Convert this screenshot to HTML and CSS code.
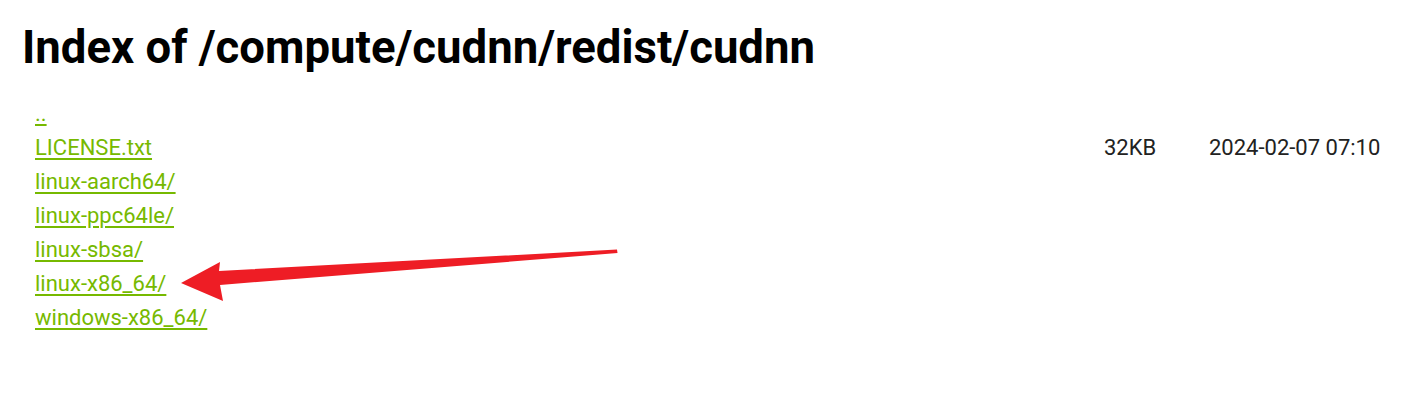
FILE: index.html
```html
<!DOCTYPE html>
<html>
<head>
<meta charset="utf-8">
<link rel="stylesheet" href="styles.css">
</head>
<body>
<h1 class="title">Index of /compute/cudnn/redist/cudnn</h1>
<div class="listing">
  <div class="row"><a class="link" href="#">..</a><span class="size"></span><span class="date"></span></div>
  <div class="row"><a class="link" href="#">LICENSE.txt</a><span class="size">32KB</span><span class="date">2024-02-07 07:10</span></div>
  <div class="row"><a class="link" href="#">linux-aarch64/</a><span class="size"></span><span class="date"></span></div>
  <div class="row"><a class="link" href="#">linux-ppc64le/</a><span class="size"></span><span class="date"></span></div>
  <div class="row"><a class="link" href="#">linux-sbsa/</a><span class="size"></span><span class="date"></span></div>
  <div class="row"><a class="link" href="#">linux-x86_64/</a><span class="size"></span><span class="date"></span></div>
  <div class="row"><a class="link" href="#">windows-x86_64/</a><span class="size"></span><span class="date"></span></div>
</div>
<svg class="arrow" width="1420" height="402" viewBox="0 0 1420 402">
  <path d="M617 249.5 L617.5 253 L220 285 L223 301 L181 283 L220 262 L219 271 Z" fill="#ee1d25"/>
</svg>
</body>
</html>
```
FILE: styles.css
```css
html, body {
  margin: 0;
  padding: 0;
  background: #fff;
}
body {
  font-family: Roboto, "Liberation Sans", sans-serif;
  color: #1a1a1a;
  position: relative;
  width: 1420px;
  height: 402px;
  overflow: hidden;
}
.title {
  margin: 0;
  padding: 22px 0 0 22px;
  font-size: 45.5px;
  font-weight: 700;
  line-height: 52px;
  color: #000;
}
.listing {
  padding: 22px 0 0 35px;
  display: flex;
  flex-direction: column;
}
.row {
  display: grid;
  grid-template-columns: 1069px 105px 200px;
  height: 34px;
  align-items: center;
  font-size: 22px;
}
.link {
  color: #76b900;
  text-decoration: underline;
  text-underline-offset: 3px;
  justify-self: start;
}
.size, .date {
  color: #222;
}
.arrow {
  position: absolute;
  left: 0;
  top: 0;
}
```
